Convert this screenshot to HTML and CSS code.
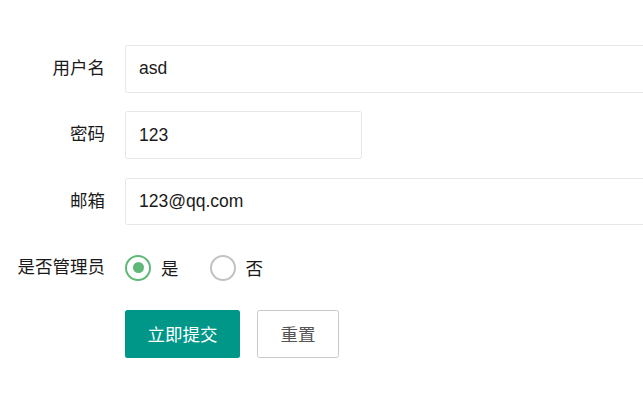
FILE: index.html
```html
<!DOCTYPE html>
<html lang="zh-CN">
<head>
<meta charset="utf-8">
<title>表单</title>
<link rel="stylesheet" href="styles.css">
</head>
<body>
<form class="form">
  <div class="form-item">
    <label class="form-label">用户名</label>
    <div class="input-block"><input class="input" type="text" value="asd"></div>
  </div>
  <div class="form-item">
    <label class="form-label">密码</label>
    <div class="input-inline"><input class="input" type="text" value="123"></div>
  </div>
  <div class="form-item">
    <label class="form-label">邮箱</label>
    <div class="input-block"><input class="input" type="text" value="123@qq.com"></div>
  </div>
  <div class="form-item">
    <label class="form-label">是否管理员</label>
    <div class="radio-group">
      <span class="radio checked"><span class="radio-icon"></span><span class="radio-text">是</span></span>
      <span class="radio"><span class="radio-icon"></span><span class="radio-text">否</span></span>
    </div>
  </div>
  <div class="form-item">
    <span class="form-label"></span>
    <div class="btn-group">
      <button type="button" class="btn btn-primary">立即提交</button>
      <button type="button" class="btn btn-default">重置</button>
    </div>
  </div>
</form>
</body>
</html>
```
FILE: styles.css
```css
html, body {
  margin: 0;
  padding: 0;
  overflow: hidden;
  background: #fff;
}
body {
  font-family: "Liberation Sans", "Noto Sans CJK SC", sans-serif;
  font-size: 17.5px;
  color: #1a1a1a;
}
.form {
  padding-top: 45px;
}
.form-item {
  display: flex;
  align-items: center;
  height: 47.5px;
  margin-bottom: 18.75px;
}
.form-label {
  width: 105px;
  flex: none;
  padding-right: 20px;
  text-align: right;
  line-height: 47.5px;
  color: #1a1a1a;
}
.input-block {
  flex: 1;
  margin-right: -4px;
}
.input-inline {
  width: 237px;
  flex: none;
}
.input {
  box-sizing: border-box;
  width: 100%;
  height: 47.5px;
  border: 1px solid #e6e6e6;
  border-radius: 2.5px;
  padding: 0 0 0 13px;
  font-family: inherit;
  font-size: 17.5px;
  color: #1a1a1a;
  background: #fff;
  outline: none;
}
.radio-group {
  display: flex;
  align-items: center;
  gap: 31px;
}
.radio {
  display: inline-flex;
  align-items: center;
  gap: 10px;
}
.radio-icon {
  box-sizing: border-box;
  width: 26px;
  height: 26px;
  border: 2px solid #c2c2c2;
  border-radius: 50%;
  display: flex;
  align-items: center;
  justify-content: center;
}
.radio.checked .radio-icon {
  border-color: #5fb878;
}
.radio.checked .radio-icon::after {
  content: "";
  width: 11px;
  height: 11px;
  border-radius: 50%;
  background: #5fb878;
}
.btn-group {
  display: flex;
  gap: 17px;
}
.btn {
  box-sizing: border-box;
  height: 47.5px;
  border-radius: 2.5px;
  font-family: inherit;
  font-size: 17.5px;
  cursor: pointer;
  padding: 0;
}
.btn-primary {
  width: 115px;
  background: #009688;
  color: #fff;
  border: none;
}
.btn-default {
  width: 82px;
  background: #fff;
  color: #555;
  border: 1px solid #c9c9c9;
}
```
